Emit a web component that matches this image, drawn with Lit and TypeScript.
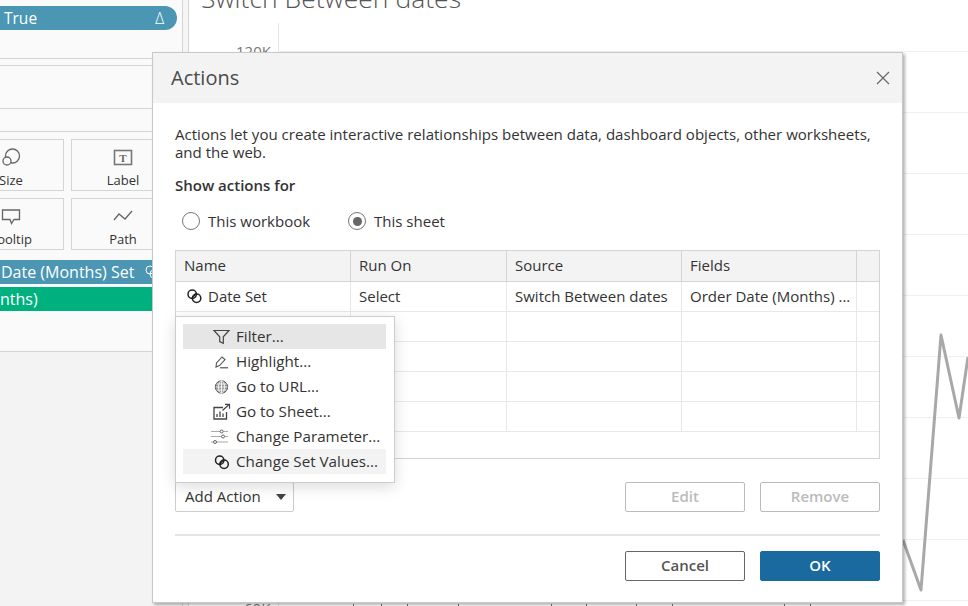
import { LitElement, html, css, svg } from 'lit';
import { customElement } from 'lit/decorators.js';

const GRID_YS = [51, 112, 173, 234, 295, 356, 417, 478, 539, 600];
// tops of the month labels that stick out under the dialog
const LABEL_XS = [353, 381, 407, 458, 551, 586, 636, 672, 784, 810];

const linkedCircles = svg`
  <circle cx="5.2" cy="5.2" r="4.2" fill="none" stroke="#222" stroke-width="1.5"></circle>
  <circle cx="9.6" cy="9.2" r="4.2" fill="none" stroke="#222" stroke-width="1.5"></circle>
  <path d="M4.5 9.5 L9.5 4.5" stroke="#222" stroke-width="1.2"></path>`;

const menuItems = [
  { label: 'Filter...', cls: 'hot', icon: svg`<path d="M1 1.5H16L10.3 7.8V14.3L6.7 12.6V7.8Z" fill="none" stroke="#444" stroke-width="1.2"></path>` },
  { label: 'Highlight...', cls: '', icon: svg`<path d="M3 13 L3.5 9 L9 3 L12 5.5 L6.5 11.5 Z" fill="none" stroke="#555" stroke-width="1.1"></path><path d="M7 13.8H15" stroke="#444" stroke-width="1.1"></path>` },
  { label: 'Go to URL...', cls: '', icon: svg`<circle cx="8.5" cy="8" r="6.2" fill="#999" stroke="#555"></circle><path d="M2.5 8H14.5M3.5 5H13.5M3.5 11H13.5M8.5 1.8V14.2" stroke="#fff" stroke-width=".8" fill="none"></path><ellipse cx="8.5" cy="8" rx="3" ry="6.2" fill="none" stroke="#fff" stroke-width=".8"></ellipse>` },
  { label: 'Go to Sheet...', cls: '', icon: svg`<path d="M10 3.5H1V15H13.5V8" fill="none" stroke="#444" stroke-width="1.3"></path><path d="M4 13V10M7 13V7.5M10 13V9.5" stroke="#555" stroke-width="1.4"></path><path d="M9.5 6.5L16 .5M12 .3H16.5V4.8" fill="none" stroke="#444" stroke-width="1.2"></path>` },
  { label: 'Change Parameter...', cls: '', icon: svg`<path d="M-2 2.5H15M-2 7.5H15M-2 13H15" stroke="#aaa" stroke-width="1.1"></path><circle cx="8.7" cy="2.5" r="1.5" fill="#fff" stroke="#666"></circle><circle cx="10" cy="7.5" r="1.5" fill="#fff" stroke="#666"></circle><circle cx="2" cy="13" r="1.5" fill="#fff" stroke="#666"></circle>` },
  { label: 'Change Set Values...', cls: 'soft', icon: svg`<g transform="translate(1.5 1)">${linkedCircles}</g>` },
];

@customElement('app-root')
export class AppRoot extends LitElement {
  static styles = css`
    :host {
      display: block;
      position: relative;
      width: 968px;
      height: 606px;
      overflow: hidden;
      background: #fff;
      font-family: "Open Sans", sans-serif;
      font-size: 15px;
      color: #333;
    }
    .page {
      display: flex;
      height: 606px;
    }
    .side {
      display: flex;
      flex-direction: column;
      width: 183px;
      flex: none;
      box-sizing: border-box;
      background: #fafafa;
      border-right: 1px solid #d4d4d4;
      overflow: hidden;
      padding-top: 6px;
    }
    .side-rest {
      flex: 1;
      background: #f3f3f3;
    }
    .gutter {
      width: 5px;
      flex: none;
      background: #f5f5f5;
      border-right: 1px solid #d4d4d4;
    }
    .pill-true {
      display: flex;
      justify-content: space-between;
      align-items: center;
      box-sizing: border-box;
      flex: none;
      width: 177px;
      height: 24px;
      padding: 0 13px 0 4px;
      border-radius: 0 12px 12px 0;
      background: #4a96b3;
      color: #fff;
      font-size: 15.5px;
    }
    .delta {
      font-weight: 300;
    }
    .rule-a {
      flex: none;
      height: 6px;
      margin-top: 28px;
      border-top: 1px solid #d4d4d4;
      border-bottom: 1px solid #d4d4d4;
    }
    .rule-b {
      flex: none;
      height: 42px;
      border-bottom: 1px solid #d4d4d4;
    }
    .rule-c {
      flex: none;
      height: 22px;
      border-bottom: 1px solid #d4d4d4;
    }
    .cards {
      display: grid;
      flex: none;
      grid-template-columns: 106px 104px;
      gap: 7px;
      margin: 7px 0 0 -42px;
    }
    .card {
      display: flex;
      flex-direction: column;
      align-items: center;
      box-sizing: border-box;
      height: 52px;
      padding-top: 8px;
      border: 1px solid #d4d4d4;
      font-size: 13px;
    }
    .card svg {
      display: block;
      height: 20px;
      width: 20px;
      margin-bottom: 3px;
    }
    .pill {
      display: flex;
      flex: none;
      align-items: center;
      height: 24px;
      color: #fff;
      padding-left: 1px;
      white-space: nowrap;
      overflow: hidden;
      font-size: 16px;
    }
    .pill svg {
      display: block;
      width: 14px;
      height: 14px;
      margin-left: 11px;
      flex: none;
    }
    .pill.blue {
      background: #4a96b3;
      margin-top: 10px;
    }
    .pill.green {
      background: #00b180;
      margin-top: 3px;
      padding-left: 0;
    }
    .rule-d {
      flex: none;
      height: 40px;
      border-bottom: 1px solid #d4d4d4;
    }
    .chart {
      flex: 1;
      position: relative;
      overflow: hidden;
    }
    .chart-title {
      margin: -16px 0 0 12px;
      font-size: 26.5px;
      font-weight: 300;
      color: #555;
      line-height: 28px;
      white-space: nowrap;
    }
    .plot {
      position: absolute;
      inset: 0;
    }
    .plot text {
      font-family: "Open Sans", sans-serif;
      font-size: 15px;
      fill: #777;
    }
    .dialog {
      position: absolute;
      left: 152px;
      top: 52px;
      width: 751px;
      height: 551px;
      box-sizing: border-box;
      display: flex;
      flex-direction: column;
      background: #fff;
      border: 1px solid #c8c8c8;
      box-shadow: 2px 2px 3px rgba(0, 0, 0, 0.3);
    }
    .head {
      display: flex;
      align-items: center;
      justify-content: space-between;
      flex: none;
      box-sizing: border-box;
      height: 50px;
      padding: 0 12px 2px 18px;
      background: #f3f3f3;
      font-size: 20px;
      color: #4a4a4a;
    }
    .head svg {
      display: block;
      width: 14px;
      height: 14px;
      margin-top: 2px;
    }
    .body {
      position: relative;
      flex: 1;
      padding: 22px 22px 0;
      display: flex;
      flex-direction: column;
    }
    .intro {
      margin: 0;
      line-height: 18px;
      font-size: 15.07px;
    }
    .show-for {
      margin-top: 14px;
      font-weight: 600;
      line-height: 20px;
    }
    .radios {
      display: flex;
      gap: 38px;
      margin: 16px 0 0 7px;
      line-height: 20px;
    }
    .radio {
      display: flex;
      align-items: center;
      gap: 8px;
    }
    .dot {
      box-sizing: border-box;
      width: 18px;
      height: 18px;
      border: 1px solid #777;
      border-radius: 50%;
      display: flex;
      align-items: center;
      justify-content: center;
    }
    .dot.on::after {
      content: "";
      width: 9px;
      height: 9px;
      border-radius: 50%;
      background: #666;
    }
    .table {
      margin-top: 19px;
      height: 209px;
      box-sizing: border-box;
      border: 1px solid #d4d4d4;
      flex: none;
    }
    .tr {
      display: grid;
      grid-template-columns: 175px 156px 175px 175px 1fr;
      height: 30px;
      box-sizing: border-box;
      border-bottom: 1px solid #e8e8e8;
    }
    .tr.th {
      height: 31px;
      background: #f3f3f3;
      border-bottom-color: #d4d4d4;
    }
    .td {
      display: flex;
      align-items: center;
      gap: 6px;
      box-sizing: border-box;
      padding: 0 0 2px 8px;
      border-right: 1px solid #e8e8e8;
      white-space: nowrap;
      overflow: hidden;
    }
    .th .td {
      border-right-color: #d4d4d4;
    }
    .td:last-child {
      border-right: 0;
    }
    .td.first {
      padding-left: 11px;
    }
    .td svg {
      width: 15px;
      height: 15px;
      flex: none;
      margin-top: 2px;
    }
    .actions {
      display: flex;
      align-items: center;
      margin-top: 23px;
    }
    .btn {
      box-sizing: border-box;
      width: 120px;
      height: 30px;
      padding-bottom: 2px;
      display: flex;
      align-items: center;
      justify-content: center;
      border: 1px solid #bbb;
      border-radius: 2px;
      background: #fff;
      font-weight: 600;
      color: #bbb;
    }
    .add {
      width: 119px;
      margin-right: auto;
      justify-content: space-between;
      padding: 0 7px 2px 9px;
      font-weight: 400;
      color: #333;
      border-color: #ccc;
    }
    .caret {
      width: 0;
      height: 0;
      margin-top: 2px;
      border: 5px solid transparent;
      border-top: 6px solid #444;
      border-bottom: 0;
    }
    .edit {
      margin-right: 15px;
    }
    .divider {
      height: 2px;
      margin-top: 22px;
      background: #e4e4e4;
      flex: none;
    }
    .footer {
      display: flex;
      justify-content: flex-end;
      gap: 15px;
      margin-top: 15px;
    }
    .cancel {
      border-color: #666;
      color: #555;
    }
    .ok {
      background: #1a699f;
      border-color: #1a699f;
      color: #fff;
    }
    .menu {
      position: absolute;
      left: 22px;
      top: 213px;
      width: 220px;
      height: 167px;
      box-sizing: border-box;
      padding: 7px 8px 7px 7px;
      background: #fff;
      border: 1px solid #ccc;
      box-shadow: 0 4px 14px rgba(0, 0, 0, 0.14);
    }
    .item {
      display: grid;
      grid-template-columns: 28px 1fr;
      align-items: center;
      box-sizing: border-box;
      height: 25px;
      padding: 0 0 2px 25px;
      white-space: nowrap;
      font-size: 15.2px;
    }
    .item svg {
      display: block;
      width: 17px;
      height: 16px;
      justify-self: center;
      margin: 2px 0 0 -2px;
      overflow: visible;
    }
    .item.hot {
      background: #e6e6e6;
    }
    .item.soft {
      background: #f3f3f3;
    }
  `;

  render() {
    return html`
      <div class="page">
        <aside class="side">
          <div class="pill-true">
            <span>True</span><span class="delta">Δ</span>
          </div>
          <div class="rule-a"></div>
          <div class="rule-b"></div>
          <div class="rule-c"></div>
          <div class="cards">
            <div class="card">
              <svg viewBox="0 0 20 20"><circle cx="11.5" cy="8" r="7" fill="none" stroke="#666" stroke-width="1.3"></circle><circle cx="6" cy="13" r="4" fill="#fafafa" stroke="#666" stroke-width="1.3"></circle></svg>
              Size
            </div>
            <div class="card">
              <svg viewBox="0 0 20 20"><rect x="1.5" y="2.5" width="17" height="14" fill="none" stroke="#777" stroke-width="1.6"></rect><text x="10" y="14" text-anchor="middle" font-family="Liberation Serif" font-weight="700" font-size="11" fill="#666">T</text></svg>
              Label
            </div>
            <div class="card">
              <svg viewBox="0 0 20 20"><path d="M1.5 3H18.5V12.5H13L10.5 16.5L9 12.5H1.5Z" fill="none" stroke="#666" stroke-width="1.3"></path></svg>
              Tooltip
            </div>
            <div class="card">
              <svg viewBox="0 0 20 20"><path d="M1 13L6 7L12 12L19 4" fill="none" stroke="#666" stroke-width="1.3"></path></svg>
              Path
            </div>
          </div>
          <div class="pill blue">Date (Months) Set
            <svg viewBox="0 0 14 14"><circle cx="5" cy="5" r="4" fill="none" stroke="#fff"></circle><circle cx="9" cy="9" r="4" fill="none" stroke="#fff"></circle></svg>
          </div>
          <div class="pill green">nths)</div>
          <div class="rule-d"></div>
          <div class="side-rest"></div>
        </aside>
        <div class="gutter"></div>
        <main class="chart">
          <div class="chart-title">Switch Between dates</div>
        </main>
      </div>
      <svg class="plot" viewBox="0 0 968 606">
        <path d="M278.5 23V606" stroke="#e6e6e6" fill="none"></path>
        ${GRID_YS.map((y) => svg`<path d="M278 ${y + 0.5}H968" stroke="#efefef" fill="none"></path>`)}
        ${LABEL_XS.map((x) => svg`<path d="M${x + 0.5} 604V606" stroke="#777" fill="none"></path>`)}
        <text x="236" y="57">120K</text>
        <text x="244" y="614">60K</text>
        <path d="M903 540L921 590L941 335L959 418L968 357" fill="none" stroke="#a8a8a8" stroke-width="3" stroke-linejoin="round"></path>
      </svg>
      <section class="dialog">
        <header class="head">
          <span>Actions</span>
          <svg viewBox="0 0 14 14"><path d="M1 1L13 13M13 1L1 13" stroke="#666" stroke-width="1.2" fill="none"></path></svg>
        </header>
        <div class="body">
          <p class="intro">Actions let you create interactive relationships between data, dashboard objects, other worksheets, and the web.</p>
          <div class="show-for">Show actions for</div>
          <div class="radios">
            <label class="radio"><span class="dot"></span>This workbook</label>
            <label class="radio"><span class="dot on"></span>This sheet</label>
          </div>
          <div class="table">
            <div class="tr th">
              <div class="td">Name</div><div class="td">Run On</div><div class="td">Source</div><div class="td">Fields</div><div class="td"></div>
            </div>
            <div class="tr">
              <div class="td first"><svg viewBox="0 0 15 15">${linkedCircles}</svg>Date Set</div>
              <div class="td">Select</div>
              <div class="td">Switch Between dates</div>
              <div class="td">Order Date (Months) ...</div>
              <div class="td"></div>
            </div>
            ${[0, 1, 2, 3].map(() => html`
              <div class="tr"><div class="td"></div><div class="td"></div><div class="td"></div><div class="td"></div><div class="td"></div></div>
            `)}
          </div>
          <div class="actions">
            <div class="btn add">Add Action<span class="caret"></span></div>
            <div class="btn edit">Edit</div>
            <div class="btn">Remove</div>
          </div>
          <div class="divider"></div>
          <div class="footer">
            <div class="btn cancel">Cancel</div>
            <div class="btn ok">OK</div>
          </div>
          <div class="menu">
            ${menuItems.map((m) => html`
              <div class="item ${m.cls}">
                <svg viewBox="0 0 17 16">${m.icon}</svg>
                <span>${m.label}</span>
              </div>
            `)}
          </div>
        </div>
      </section>
    `;
  }
}
